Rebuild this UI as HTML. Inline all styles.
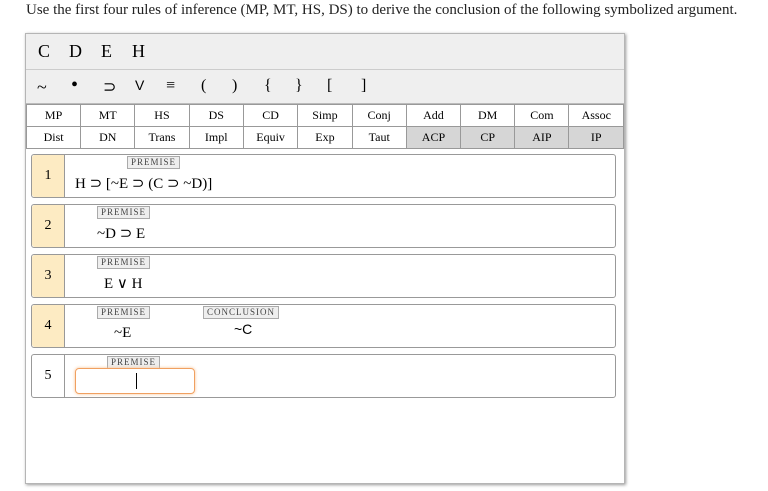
<!DOCTYPE html>
<html><head><style>
body{margin:0;width:768px;height:491px;background:#fff;font-family:"Liberation Serif",serif;position:relative;overflow:hidden}
.a{position:absolute}
.q{left:26px;top:2px;font-size:15px;color:#222;white-space:nowrap}
.panel{left:25px;top:33px;width:598px;height:449px;border:1px solid #b5b5b5;box-shadow:1px 1px 3px #999;background:#fff}
.r1{left:0;top:0;width:598px;height:35px;background:#efefef;border-bottom:1px solid #ccc;font-size:18px}
.r2{left:0;top:36px;width:598px;height:33px;background:#efefef;border-bottom:1px solid #bbb;font-size:16px}
table{position:absolute;left:0;top:70px;border-collapse:collapse;width:598px;font-size:12px}
td{border:1px solid #999;text-align:center;height:21px;padding:0;width:54px}
td.g{background:#d6d6d6}
.ln{left:5px;width:583px;height:42px;border:1px solid #999;border-radius:3px;background:#fff}
.num{left:0;top:0;width:32px;height:42px;background:#fdebc3;border-right:1px solid #999;font-size:14px;line-height:42px;text-align:center;border-radius:3px 0 0 3px}
.tag{font-size:9px;letter-spacing:1px;background:#eee;border:1px solid #aaa;padding:0 3px;line-height:11px;color:#444}
.f{font-family:"Liberation Sans",sans-serif;font-size:14px}
</style></head><body>
<div class="a q">Use the first four rules of inference (MP, MT, HS, DS) to derive the conclusion of the following symbolized argument.</div>
<div class="a panel">
<div class="a r1"><span class="a" style="left:12px;top:7px">C</span><span class="a" style="left:43px;top:7px">D</span><span class="a" style="left:75px;top:7px">E</span><span class="a" style="left:106px;top:7px">H</span></div>
<div class="a r2">
<span class="a" style="left:11px;top:7px;font-size:18px">~</span><span class="a" style="left:45px;top:4px;font-size:20px">•</span><span class="a" style="left:77px;top:7px">⊃</span><span class="a" style="left:109px;top:7px;font-family:'Liberation Sans',sans-serif;font-size:14px">V</span><span class="a" style="left:140px;top:7px">≡</span><span class="a" style="left:175px;top:7px">(</span><span class="a" style="left:206px;top:7px">)</span><span class="a" style="left:238px;top:7px">{</span><span class="a" style="left:269px;top:7px">}</span><span class="a" style="left:301px;top:7px">[</span><span class="a" style="left:335px;top:7px">]</span></div>
<table><tr><td>MP</td><td>MT</td><td>HS</td><td>DS</td><td>CD</td><td>Simp</td><td>Conj</td><td>Add</td><td>DM</td><td>Com</td><td>Assoc</td></tr>
<tr><td>Dist</td><td>DN</td><td>Trans</td><td>Impl</td><td>Equiv</td><td>Exp</td><td>Taut</td><td class="g">ACP</td><td class="g">CP</td><td class="g">AIP</td><td class="g">IP</td></tr></table>

<div class="a ln" style="top:120px"><div class="a num">1</div><span class="a tag" style="left:95px;top:1px">PREMISE</span><span class="a" style="left:43px;top:19px;font-size:15px">H ⊃ [~E ⊃ (C ⊃ ~D)]</span></div>
<div class="a ln" style="top:170px"><div class="a num">2</div><span class="a tag" style="left:65px;top:1px">PREMISE</span><span class="a" style="left:65px;top:19px;font-size:15px">~D ⊃ E</span></div>
<div class="a ln" style="top:220px"><div class="a num">3</div><span class="a tag" style="left:65px;top:1px">PREMISE</span><span class="a" style="left:72px;top:19px;font-size:15px">E ∨ H</span></div>
<div class="a ln" style="top:270px"><div class="a num">4</div><span class="a tag" style="left:65px;top:1px">PREMISE</span><span class="a tag" style="left:171px;top:1px">CONCLUSION</span><span class="a" style="left:82px;top:20px;font-size:15px">~E</span><span class="a f" style="left:202px;top:16px">~C</span></div>
<div class="a ln" style="top:320px"><div class="a num" style="background:#fff">5</div><span class="a tag" style="left:75px;top:1px">PREMISE</span><div class="a" style="left:43px;top:13px;width:118px;height:24px;border:1px solid #f0a060;border-radius:4px;box-shadow:0 0 3px #f8c090"><div class="a" style="left:60px;top:4px;width:1px;height:16px;background:#000"></div></div></div>
</div>
</body></html>
